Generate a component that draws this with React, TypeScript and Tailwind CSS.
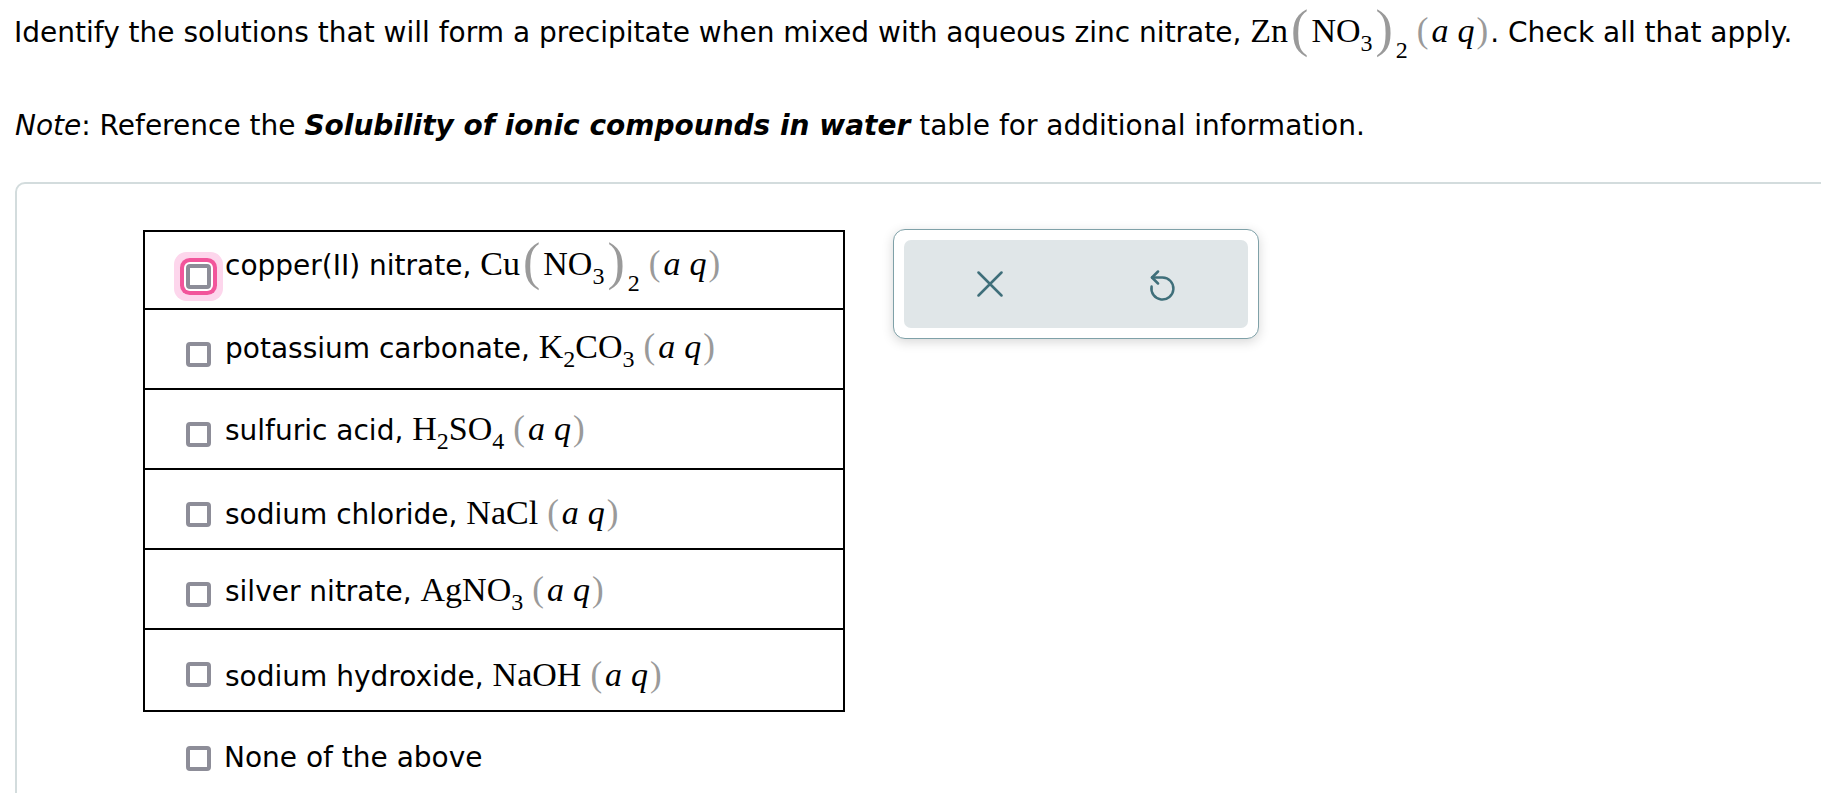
import type { ReactNode } from "react";

// Question card: check-all-that-apply list of solutions with chemical formulas.

const SERIF = "font-['Liberation_Serif',serif]";

function Sub({ children, drop = "normal" }: { children: ReactNode; drop?: "normal" | "deep" }) {
  return (
    <span
      className={`relative text-[24px] leading-[0] ${drop === "deep" ? "top-[16px]" : "top-[9px]"}`}
    >
      {children}
    </span>
  );
}

function Paren({ children, big }: { children: string; big?: boolean }) {
  return big ? (
    <span className="relative top-[4px] mx-[3px] text-[52px] leading-[0] font-light text-[#9a9a9a]">
      {children}
    </span>
  ) : (
    <span className="mx-[2px] text-[35px] leading-[0] text-[#9a9a9a]">{children}</span>
  );
}

function Aq() {
  return (
    <span className="ml-[7px]">
      <Paren>(</Paren>
      <span className="ml-[1px] italic">a</span>
      <span className="ml-[9px] italic">q</span>
      <Paren>)</Paren>
    </span>
  );
}

function Formula({ children }: { children: ReactNode }) {
  return <span className={`${SERIF} text-[34px] leading-[0]`}>{children}</span>;
}

function Checkbox({ focused }: { focused?: boolean }) {
  return (
    <span
      className={`block size-[25px] shrink-0 rounded-[4px] border-[4px] border-[#8d8d98] bg-white ${
        focused ? "shadow-[0_0_0_2px_#ffffff,0_0_0_6px_#f2559b,0_0_0_12px_#fdd6ec]" : ""
      }`}
    />
  );
}

type Row = { label: string; formula: ReactNode; offset: string; focused?: boolean };

const ROWS: Row[] = [
  {
    label: "copper(II) nitrate, ",
    focused: true,
    offset: "mt-[20px]",
    formula: (
      <Formula>
        Cu
        <Paren big>(</Paren>
        NO
        <Sub>3</Sub>
        <Paren big>)</Paren>
        <Sub drop="deep">2</Sub>
        <Aq />
      </Formula>
    ),
  },
  {
    label: "potassium carbonate, ",
    offset: "mt-[25px]",
    formula: (
      <Formula>
        K<Sub>2</Sub>CO<Sub>3</Sub>
        <Aq />
      </Formula>
    ),
  },
  {
    label: "sulfuric acid, ",
    offset: "mt-[27px]",
    formula: (
      <Formula>
        H<Sub>2</Sub>SO<Sub>4</Sub>
        <Aq />
      </Formula>
    ),
  },
  {
    label: "sodium chloride, ",
    offset: "mt-[31px]",
    formula: (
      <Formula>
        NaCl
        <Aq />
      </Formula>
    ),
  },
  {
    label: "silver nitrate, ",
    offset: "mt-[28px]",
    formula: (
      <Formula>
        AgNO<Sub>3</Sub>
        <Aq />
      </Formula>
    ),
  },
  {
    label: "sodium hydroxide, ",
    offset: "mt-[33px]",
    formula: (
      <Formula>
        NaOH
        <Aq />
      </Formula>
    ),
  },
];

function XIcon() {
  return (
    <svg viewBox="0 0 26 26" className="size-[26px]" fill="none" stroke="#3f6f7a" strokeWidth="2.5" strokeLinecap="round">
      <path d="M1.5 1.5 L24.5 24.5 M24.5 1.5 L1.5 24.5" />
    </svg>
  );
}

function UndoIcon() {
  return (
    <svg
      viewBox="0 0 30 32"
      className="mt-[4px] h-[32px] w-[30px]"
      fill="none"
      stroke="#3f6f7a"
      strokeWidth="2.5"
      strokeLinecap="round"
      strokeLinejoin="round"
    >
      <path d="M11 1.5 L5 7.5 L11 13.5" />
      <path d="M5 7.5 H15.5 A11 11 0 1 1 4.6 16.5" />
    </svg>
  );
}

export default function App() {
  return (
    <div className="h-[793px] w-full overflow-hidden bg-white font-['DejaVu_Sans','Verdana',sans-serif] text-[28px] text-black">
      <p className="whitespace-nowrap pl-[14px] pt-[19px] leading-[28px]">
        Identify the solutions that will form a precipitate when mixed with aqueous zinc nitrate,{" "}
        <Formula>
          Zn
          <Paren big>(</Paren>
          NO
          <Sub>3</Sub>
          <Paren big>)</Paren>
          <Sub drop="deep">2</Sub>
          <Aq />
        </Formula>
        . Check all that apply.
      </p>

      <p className="mt-[65px] whitespace-nowrap pl-[15px] leading-[28px]">
        <i>Note</i>: Reference the <b className="italic">Solubility of ionic compounds in water</b> table for
        additional information.
      </p>

      <div className="-mr-[20px] ml-[15px] mt-[42px] h-[700px] rounded-tl-[10px] border-2 border-[#d3dcdd]">
        <div className="flex items-start pl-[126px] pt-[46px]">
          <div className="flex flex-col">
            <div className="w-[702px] divide-y-2 divide-black border-2 border-black">
              {ROWS.map((row, i) => (
                <div
                  key={row.label}
                  className={`flex items-start pl-[41px] ${i === 0 ? "h-[78px]" : "h-[80px]"}`}
                >
                  <div className="mt-[32px]">
                    <Checkbox focused={row.focused} />
                  </div>
                  <div className={`ml-[14px] whitespace-pre leading-[28px] ${row.offset}`}>
                    {row.label}
                    {row.formula}
                  </div>
                </div>
              ))}
            </div>

            <div className="mt-[32px] flex items-start pl-[43px]">
              <div className="mt-[2px]">
                <Checkbox />
              </div>
              <span className="ml-[13px] leading-[28px]">None of the above</span>
            </div>
          </div>

          <div className="-mt-px ml-[48px] h-[110px] w-[366px] rounded-[12px] border-[1.5px] border-[#7fa1a8] bg-white p-[10px] shadow-[0_3px_12px_rgba(0,0,0,0.16)]">
            <div className="flex h-full rounded-[7px] bg-[#e0e6e8]">
              <button type="button" aria-label="Clear" className="flex flex-1 items-center justify-center">
                <XIcon />
              </button>
              <button type="button" aria-label="Reset" className="flex flex-1 items-center justify-center">
                <UndoIcon />
              </button>
            </div>
          </div>
        </div>
      </div>
    </div>
  );
}
